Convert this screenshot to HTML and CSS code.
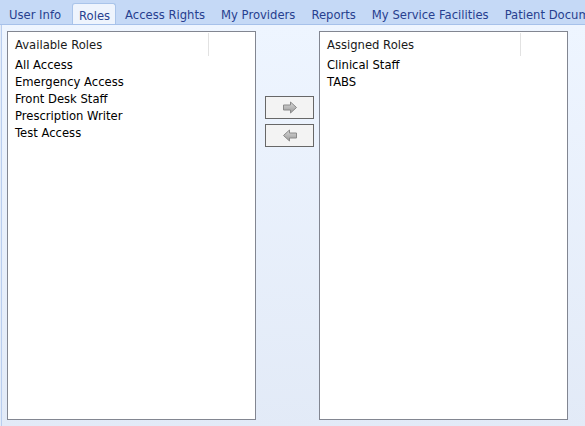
FILE: index.html
```html
<!DOCTYPE html>
<html>
<head>
<meta charset="utf-8">
<link rel="stylesheet" href="styles.css">
</head>
<body>
<div class="tabs">
  <div class="tab">User Info</div>
  <div class="tab active">Roles</div>
  <div class="tab">Access Rights</div>
  <div class="tab">My Providers</div>
  <div class="tab">Reports</div>
  <div class="tab">My Service Facilities</div>
  <div class="tab">Patient Documents</div>
</div>
<div class="content">
  <div class="listbox">
    <div class="header"><span class="col">Available Roles</span><span class="col2"></span></div>
    <div class="item">All Access</div>
    <div class="item">Emergency Access</div>
    <div class="item">Front Desk Staff</div>
    <div class="item">Prescription Writer</div>
    <div class="item">Test Access</div>
  </div>
  <div class="mid">
    <button class="btn" type="button">
      <svg width="16" height="13" viewBox="0 0 16 13"><defs><linearGradient id="g1" x1="0" y1="0" x2="0" y2="1"><stop offset="0" stop-color="#d8d8d8"/><stop offset="1" stop-color="#9a9a9a"/></linearGradient></defs><polygon points="1.5,4 8.5,4 8.5,1 14.5,6.5 8.5,12 8.5,9 1.5,9" fill="url(#g1)" stroke="#8a8a8a" stroke-width="1"/></svg>
    </button>
    <button class="btn" type="button">
      <svg width="16" height="13" viewBox="0 0 16 13"><defs><linearGradient id="g2" x1="0" y1="0" x2="0" y2="1"><stop offset="0" stop-color="#d8d8d8"/><stop offset="1" stop-color="#9a9a9a"/></linearGradient></defs><polygon points="14.5,4 7.5,4 7.5,1 1.5,6.5 7.5,12 7.5,9 14.5,9" fill="url(#g2)" stroke="#8a8a8a" stroke-width="1"/></svg>
    </button>
  </div>
  <div class="listbox">
    <div class="header"><span class="col">Assigned Roles</span><span class="col2"></span></div>
    <div class="item">Clinical Staff</div>
    <div class="item">TABS</div>
  </div>
</div>
</body>
</html>
```
FILE: styles.css
```css
html, body {
  margin: 0;
  padding: 0;
  height: 100%;
  overflow: hidden;
}
body {
  font-family: "DejaVu Sans", Verdana, sans-serif;
  font-size: 11.6px;
  background: #e3ebf7;
}
.tabs {
  display: flex;
  height: 24px;
  background: #c5d9f6;
  border-bottom: 1px solid #a6c1ea;
  padding-left: 1px;
  white-space: nowrap;
  overflow: hidden;
}
.tab {
  padding: 0 8px;
  line-height: 20px;
  margin-top: 5px;
  color: #27408f;
  flex: none;
}
.tab.active {
  margin-top: 3px;
  padding: 2px 5px 0 6px;
  line-height: 20px;
  background: #eef4fd;
  border: 1px solid #a9c4ea;
  border-bottom: none;
  border-radius: 3px 3px 0 0;
  box-sizing: border-box;
  height: 22px;
  position: relative;
  z-index: 1;
  margin-left: 3px;
  margin-right: 1px;
}
.content {
  display: grid;
  grid-template-columns: 249px 63px 249px;
  align-items: start;
  height: 401px;
  padding: 6px 0 0 5px;
  border-left: 1px solid #b9cdee;
  margin-left: 1px;
  background: linear-gradient(#eef5ff, #e2eaf7);
}
.listbox {
  height: 389px;
  box-sizing: border-box;
  background: #fff;
  border: 1px solid #828691;
}
.header {
  display: flex;
  height: 24px;
  line-height: 24px;
  padding-top: 1px;
  box-sizing: border-box;
  color: #1a1a1a;
}
.col {
  width: 193px;
  padding-left: 7px;
  border-right: 1px solid #e2e2e2;
}
.item {
  padding-left: 7px;
  line-height: 17px;
  color: #000;
  position: relative;
  top: 1px;
}
.mid {
  display: flex;
  flex-direction: column;
  gap: 5px;
  padding: 65px 0 0 9px;
}
.btn {
  width: 49px;
  height: 23px;
  box-sizing: border-box;
  border: 1px solid #676767;
  background: #f3f3f3;
  padding: 0;
  margin: 0;
  display: flex;
  align-items: center;
  justify-content: center;
}
.btn svg {
  display: block;
}
```
